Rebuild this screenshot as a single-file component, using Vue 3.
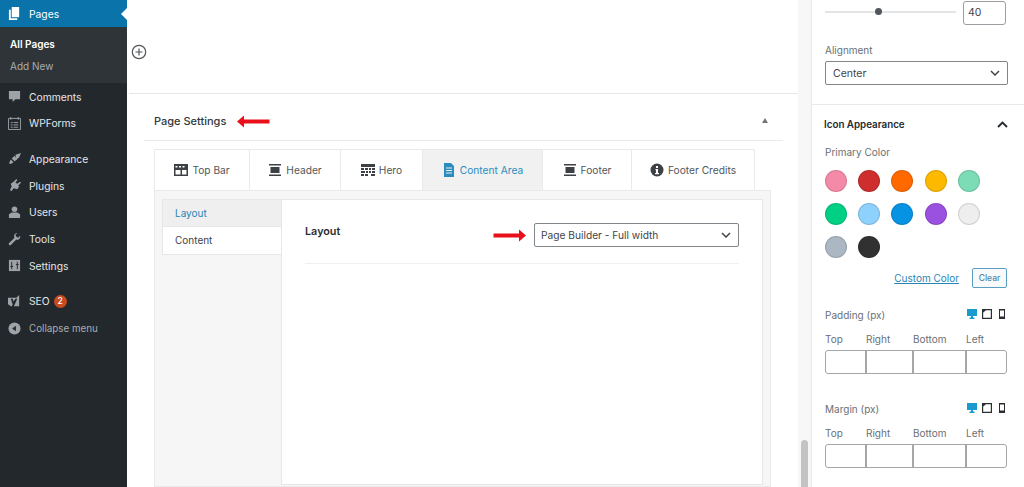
<script setup>
const swatches = ['#f48aa8','#cf2e2e','#ff6900','#fcb900','#7bdcb5','#00d084','#8ed1fc','#0693e3','#9b51e0','#eeeeee','#abb8c3','#313131']
const sides = [['Top',41],['Right',47],['Bottom',53],['Left',41]]
</script>

<template>
  <div class="page">
    <aside class="side">
      <div class="item active">
        <svg class="ic" viewBox="0 0 14 14"><path fill="#fff" d="M4 0h8v11H4z"/><path fill="#fff" d="M1 3h2v9h7v2H1z"/></svg>
        <span>Pages</span>
        <i class="notch"></i>
      </div>
      <div class="sub">
        <div class="subitem on">All Pages</div>
        <div class="subitem">Add New</div>
      </div>
      <div class="item">
        <svg class="ic" viewBox="0 0 14 14"><path fill="#9ea3a8" d="M1 1h12v9H8l-3 3v-3H1z"/></svg>
        <span>Comments</span>
      </div>
      <div class="item">
        <svg class="ic" viewBox="0 0 14 14"><path fill="none" stroke="#9ea3a8" d="M.5 1.500h13v12H.5z"/><path stroke="#9ea3a8" d="M3 0v3M11 0v3M3 6h2M6 6h5M3 8.500h2M6 8.500h5M3 11h2M6 11h5"/></svg>
        <span>WPForms</span>
      </div>
      <div class="item gap">
        <svg class="ic" viewBox="0 0 14 14"><path fill="#9ea3a8" d="M8 3l6-2-2 5-3 2zM7 4l3 4-3 2-3-3zM3 8l3 3-3 2-2-1z"/></svg>
        <span>Appearance</span>
      </div>
      <div class="item">
        <svg class="ic" viewBox="0 0 14 14"><path fill="#9ea3a8" d="M9 0l1 1-2 3 2 1 3-2 1 1-3 3 1 1-2 3-4-1-2 3-2-1 2-4-1-3 3-2z"/></svg>
        <span>Plugins</span>
      </div>
      <div class="item">
        <svg class="ic" viewBox="0 0 14 14"><circle fill="#9ea3a8" cx="7" cy="3.500" r="3"/><path fill="#9ea3a8" d="M1 13V9l3-2h6l3 2v4z"/></svg>
        <span>Users</span>
      </div>
      <div class="item">
        <svg class="ic" viewBox="0 0 14 14"><path fill="#9ea3a8" d="M13 3l-2 2-2-1-1-2 2-2C7 0 6 3 7 5L1 11c-1 1 1 3 2 2l6-6c2 1 5-1 4-4z"/></svg>
        <span>Tools</span>
      </div>
      <div class="item">
        <svg class="ic" viewBox="0 0 14 14"><path fill="#9ea3a8" d="M1 1h12v12H1z"/><path stroke="#23282d" d="M4 3v8M10 3v8M2.500 8h3M8.500 6h3"/></svg>
        <span>Settings</span>
      </div>
      <div class="item gap">
        <svg class="ic" viewBox="0 0 14 14"><path fill="#9ea3a8" d="M0 3h9l3-3v12H3l-3-2z"/><path fill="#23282d" d="M3 4h2l1 3 2-3h2L6 13H4l1-3z"/></svg>
        <span>SEO</span><b class="badge">2</b>
      </div>
      <div class="item collapse">
        <svg class="ic" viewBox="0 0 14 14"><circle fill="#9ea3a8" cx="7" cy="7" r="6.500"/><path fill="#23282d" d="M8.500 4v6l-4-3z"/></svg>
        <span>Collapse menu</span>
      </div>
    </aside>

    <main class="main">
      <div class="editor">
        <svg class="add" viewBox="0 0 16 16"><circle cx="8" cy="8" r="6.700" fill="none" stroke="#50565a" stroke-width="1.200"/><path stroke="#50565a" stroke-width="1.200" d="M8 4.500v7M4.500 8h7"/></svg>
      </div>
      <section class="settings">
        <header class="head">
          <strong>Page Settings</strong>
          <svg class="arrow" width="33" height="13" viewBox="0 0 33 13"><path fill="#e8101a" d="M0 6.500l7-6v4h25.500v4H7v4z"/></svg>
          <i class="caret"></i>
        </header>
        <nav class="tabs">
          <div class="tab" style="width:95px">
            <svg viewBox="0 0 14 14"><path fill="#3d4145" d="M0 1h14v12H0z"/><path fill="#fff" d="M1.500 3h2v1.500h-2zM5 3h2v1.500H5zM8.500 3h2v1.500h-2zM1.500 7h5v4.500h-5zM8 7h4.500v4.500H8z"/></svg>Top Bar
          </div>
          <div class="tab" style="width:91px">
            <svg viewBox="0 0 14 14"><path fill="#3d4145" d="M1 1h12v1.500H1zM2.500 4h9v6h-9zM1 11.500h12V13H1z"/></svg>Header
          </div>
          <div class="tab" style="width:82px">
            <svg viewBox="0 0 14 14"><path fill="#3d4145" d="M0 1h14v3H0zM0 5h3v2H0zM4 5h3v2H4zM8 5h2v2H8zM11 5h3v2h-3zM0 8h4v2H0zM5 8h2v2H5zM8 8h2v2H8zM11 8h3v2h-3zM0 11h3v2H0zM4 11h3v2H4zM10 11h4v2h-4z"/></svg>Hero
          </div>
          <div class="tab current" style="width:120px">
            <svg viewBox="0 0 14 14"><path fill="#2a8dbe" d="M2 0h7l3 3v11H2z"/><path stroke="#eef0f1" d="M4 5h6M4 7.500h6M4 10h6"/></svg>Content Area
          </div>
          <div class="tab" style="width:89px">
            <svg viewBox="0 0 14 14"><path fill="#3d4145" d="M1 1h12v1.500H1zM2.500 4h9v6h-9zM1 11.500h12V13H1z"/></svg>Footer
          </div>
          <div class="tab last" style="width:124px">
            <svg viewBox="0 0 14 14"><circle cx="7" cy="7" r="6.500" fill="#3d4145"/><path fill="#fff" d="M6 3h2v2H6zM5.500 6H8v4h1v1.200H5V10h1V7.200h-.5z"/></svg>Footer Credits
          </div>
        </nav>
        <div class="panel">
          <div class="vnav">
            <div class="vitem sel">Layout</div>
            <div class="vitem">Content</div>
          </div>
          <div class="content">
            <div class="row">
              <strong>Layout</strong>
              <svg class="arrow2" width="33" height="13" viewBox="0 0 33 13"><path fill="#e8101a" d="M33 6.500l-7-6v4H.5v4H26v4z"/></svg>
              <div class="select wide">
                <span>Page Builder - Full width</span>
                <svg width="10" height="6" viewBox="0 0 10 6"><path fill="none" stroke="#444" stroke-width="1.500" d="M1 1l4 4 4-4"/></svg>
              </div>
            </div>
          </div>
        </div>
      </section>
    </main>

    <div class="track"><div class="thumb"></div></div>

    <aside class="right">
      <div class="block first">
        <div class="slider">
          <div class="rail"><i class="knob"></i></div>
          <div class="num">40</div>
        </div>
        <label class="lab align">Alignment</label>
        <div class="select narrow">
          <span>Center</span>
          <svg width="10" height="6" viewBox="0 0 10 6"><path fill="none" stroke="#444" stroke-width="1.500" d="M1 1l4 4 4-4"/></svg>
        </div>
      </div>
      <div class="block">
        <div class="title">
          <strong>Icon Appearance</strong>
          <svg width="11" height="7" viewBox="0 0 11 7"><path fill="none" stroke="#23282d" stroke-width="1.800" d="M1 6l4.500-4.500L10 6"/></svg>
        </div>
        <div class="lab primary">Primary Color</div>
        <div class="swatches">
          <i v-for="c in swatches" :key="c" class="sw" :style="{ background: c }"></i>
        </div>
        <div class="custom">
          <a>Custom Color</a>
          <button>Clear</button>
        </div>
        <template v-for="name in ['Padding (px)', 'Margin (px)']" :key="name">
          <div class="boxhead">
            <span class="lab">{{ name }}</span>
            <span class="devices">
              <svg viewBox="0 0 10 10"><path fill="#1b9ad0" d="M0 0h10v7H6v1.500h1.500V10h-5V8.500H4V7H0z"/></svg>
              <svg viewBox="0 0 10 10"><path fill="#2b2f33" d="M0 0h10v10H0zM1.200 3.500v5.300h7.600V1.200H4z"/></svg>
              <svg viewBox="0 0 10 10"><path fill="#2b2f33" d="M2 0h6v10H2zM3 1.500V7.500h4v-6z"/></svg>
            </span>
          </div>
          <div class="sides">
            <span v-for="s in sides" :key="s[0]" :style="{ width: s[1] + 'px' }">{{ s[0] }}</span>
          </div>
          <div class="boxes">
            <i v-for="s in sides" :key="s[0]" :style="{ width: s[1] + 'px' }"></i>
          </div>
        </template>
      </div>
    </aside>
  </div>
</template>

<style>
html, body { margin: 0; overflow: hidden; background: #fff; }
</style>

<style scoped>
.page { display: flex; width: 1024px; height: 487px; overflow: hidden; font-family: "Inter", "Liberation Sans", sans-serif; font-size: 10.500px; color: #3f4448; background: #fff; }
.side { flex: none; width: 127px; background: #23282d; color: #e4e6e8; font-size: 10.300px; }
.item { position: relative; display: flex; align-items: center; height: 26.7px; padding: 0.5px 0 0 8px; box-sizing: border-box; }
.item span { margin-left: 8px; }
.ic { width: 13px; height: 13px; flex: none; }
.gap { margin-top: 9px; }
.active { height: 27px; background: #0a73aa; color: #fff; }
.notch { position: absolute; right: 0; top: 8px; border: 6px solid transparent; border-right-color: #fff; border-left: 0; }
.sub { height: 56px; padding-top: 6px; box-sizing: border-box; background: #2f3439; }
.subitem { height: 22px; line-height: 23px; padding-left: 10px; font-size: 10px; color: #a9adb1; }
.subitem.on { color: #fff; font-weight: 600; }
.badge { display: inline-block; width: 13px; height: 13px; margin-left: 4px; border-radius: 50%; background: #ca4a1f; color: #fff; font-size: 8.500px; line-height: 13px; text-align: center; font-weight: 500; }
.collapse { color: #a9adb1; font-size: 9.800px; }

.main { flex: none; width: 669px; margin-left: 2px; }
.editor { position: relative; height: 93px; border-bottom: 1px solid #e6e7e8; }
.add { position: absolute; left: 2px; top: 44px; width: 16px; height: 16px; }
.settings { padding: 0 15px; }
.head { display: flex; align-items: center; height: 38px; padding: 8px 0 0 10px; border-bottom: 1px solid #e9eaeb; }
.head strong { font-size: 11px; font-weight: 500; color: #32373c; }
.arrow { margin-left: 11px; }
.caret { margin-left: auto; margin-right: 15px; margin-bottom: 2px; border: 3.500px solid transparent; border-bottom: 5px solid #72777c; border-top: 0; }
.tabs { display: flex; height: 41px; margin: 8px 0 0 10px; box-sizing: border-box; border: 1px solid #e9eaeb; border-bottom: 0; width: 601px; }
.tab { flex: none; box-sizing: border-box; display: flex; align-items: center; justify-content: center; gap: 4px; border-right: 1px solid #e9eaeb; font-size: 10.200px; color: #50565a; }
.tab.last { border-right: 0; flex: 1; }
.tab svg { width: 14px; height: 14px; }
.current { background: #f1f1f1; color: #2a8dbe; }
.panel { display: flex; width: 617px; height: 297px; margin-left: 10px; box-sizing: border-box; padding: 8px 7px 1px; background: #f6f6f6; border: 1px solid #e9eaeb; }
.vnav { flex: none; width: 119px; align-self: flex-start; background: #fff; border: 1px solid #e6e7e8; border-right: 0; box-sizing: border-box; }
.vitem { height: 27px; line-height: 27px; padding-left: 12px; font-size: 10px; color: #3f4448; box-sizing: border-box; }
.vitem.sel { background: #efefef; color: #2a85b5; border-bottom: 1px solid #e6e7e8; }
.content { flex: 1; background: #fff; border: 1px solid #e6e7e8; padding: 0 23px; }
.row { display: flex; align-items: center; height: 64px; padding-top: 7px; border-bottom: 1px solid #f0f0f1; box-sizing: border-box; }
.row strong { font-size: 10.800px; font-weight: 600; color: #2b2f33; margin-bottom: 8px; }
.arrow2 { margin-left: auto; margin-right: 8px; margin-top: 1px; }
.select { display: flex; align-items: center; justify-content: space-between; box-sizing: border-box; height: 24px; padding: 0 7px 0 6px; background: #fff; border: 1px solid #81868b; border-radius: 2px; font-size: 10.200px; color: #3f4448; }
.wide { width: 205px; }
.narrow { width: 183px; font-size: 10.500px; padding-left: 7px; }

.track { flex: none; width: 14px; position: relative; background: #f7f7f7; border-right: 1px solid #e8e8e8; box-sizing: border-box; }
.thumb { position: absolute; left: 3px; right: 3px; top: 440px; bottom: 0; background: #c3c3c3; border-radius: 4px 4px 0 0; }

.right { flex: 1; min-width: 0; }
.block { padding: 0 13px; }
.first { height: 105px; border-bottom: 1px solid #e9eaeb; box-sizing: border-box; }
.slider { display: flex; align-items: center; height: 24px; padding-top: 1px; gap: 7px; }
.rail { position: relative; width: 131px; height: 2px; background: #e3e4e5; margin-top: -3px; }
.knob { position: absolute; left: 50px; top: -3px; width: 7px; height: 7px; border-radius: 50%; background: #50565c; }
.num { width: 43px; height: 24px; box-sizing: border-box; border: 1px solid #9a9ea2; border-radius: 3px; padding-left: 4px; line-height: 22px; font-size: 10.500px; }
.lab { font-size: 10px; color: #6b7074; display: block; }
.align { margin: 19px 0 5px; line-height: 12px; }
.title { display: flex; justify-content: space-between; align-items: center; height: 37px; padding: 1px 3px 0 0; box-sizing: border-box; margin-left: -1px; }
.title strong { font-size: 9.800px; font-weight: 600; color: #23282d; }
.primary { margin-top: 4px; line-height: 12px; }
.swatches { display: flex; flex-wrap: wrap; gap: 11px 11.200px; width: 180px; margin-top: 12px; }
.sw { width: 22px; height: 22px; border-radius: 50%; box-sizing: border-box; border: 1px solid rgba(0,0,0,.12); }
.custom { display: flex; justify-content: flex-end; align-items: center; gap: 13px; height: 20px; margin-top: 10px; width: 182px; }
.custom a { color: #2a85b5; text-decoration: underline; font-size: 10px; }
.custom button { width: 35px; height: 20px; padding: 0; background: #f8f9fa; border: 1px solid #5a9fc2; border-radius: 2px; color: #4f8aa8; font: 500 8.500px "Inter", "Liberation Sans", sans-serif; }
.boxhead { display: flex; justify-content: space-between; align-items: center; height: 12px; width: 182px; margin-top: 21px; }
.boxes + .boxhead { margin-top: 29px; }
.devices { display: flex; gap: 5px; margin-top: -3px; }
.devices svg { width: 10px; height: 10px; }
.sides { display: flex; width: 182px; margin-top: 12px; height: 12px; line-height: 12px; font-size: 10px; color: #6b7074; }
.boxes { display: flex; width: 182px; height: 24px; margin-top: 5px; box-sizing: border-box; border: 1px solid #a3a7aa; border-radius: 3px; overflow: hidden; }
.boxes i { box-sizing: border-box; border-right: 2px solid #a3a7aa; }
.boxes i:last-child { border-right: 0; flex: 1; }
</style>
